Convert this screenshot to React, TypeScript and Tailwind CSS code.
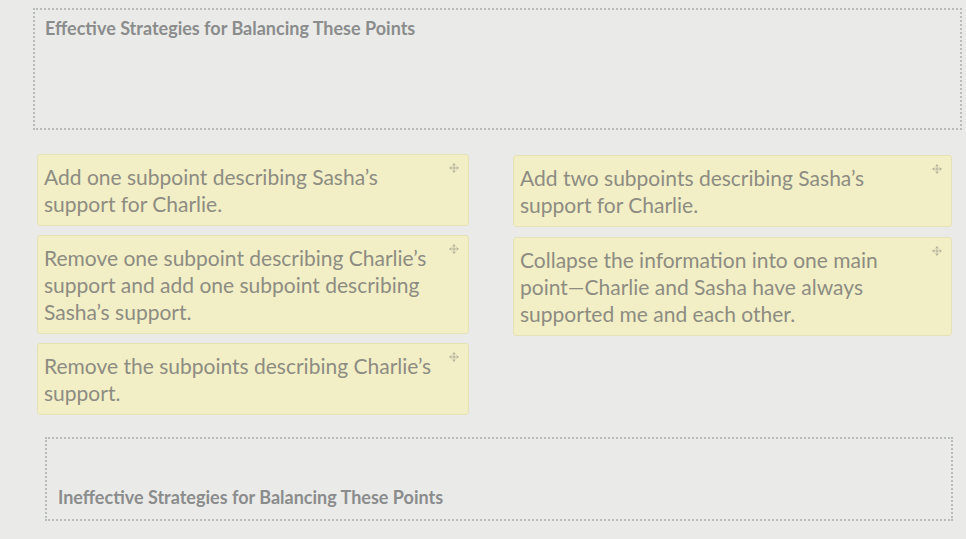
import React from "react";
import { Move } from "lucide-react";

const LEFT = [
  "Add one subpoint describing Sasha’s support for Charlie.",
  "Remove one subpoint describing Charlie’s support and add one subpoint describing Sasha’s support.",
  "Remove the subpoints describing Charlie’s support.",
];

const RIGHT = [
  "Add two subpoints describing Sasha’s support for Charlie.",
  "Collapse the information into one main point—Charlie and Sasha have always supported me and each other.",
];

function Card({ text }: { text: string }) {
  return (
    <div className="relative bg-[#f2efc6] border border-[#e7e2b6] rounded-[3px] pl-[6px] pr-[36px] pt-[8px] pb-[8px]">
      <p className="text-[21px] leading-[27px] text-[#8d8c82]">{text}</p>
      <Move className="absolute top-[8px] right-[9px] w-[10px] h-[10px] text-[#a9a795]" strokeWidth={2} />
    </div>
  );
}

export default function App() {
  return (
    <div
      className="w-[966px] h-[539px] overflow-hidden bg-[#eaebe9] pt-[8px]"
      style={{ fontFamily: "Lato, 'Open Sans', sans-serif" }}
    >
      {/* Effective drop zone */}
      <div className="ml-[33px] w-[929px] h-[122px] border-2 border-dotted border-[#b9bcbc] px-[10px] pt-[7px]">
        <h2 className="text-[18px] font-bold text-[#8b8c8c] leading-[22px]">
          Effective Strategies for Balancing These Points
        </h2>
      </div>

      {/* Answer cards */}
      <div className="mt-[24px] ml-[37px] flex gap-[44px] items-start">
        <div className="w-[432px] flex flex-col gap-[9px]">
          {LEFT.map((t) => (
            <Card key={t} text={t} />
          ))}
        </div>
        <div className="w-[439px] flex flex-col gap-[10px] mt-[1px]">
          {RIGHT.map((t) => (
            <Card key={t} text={t} />
          ))}
        </div>
      </div>

      {/* Ineffective drop zone */}
      <div className="mt-[22px] ml-[45px] w-[908px] h-[84px] border-2 border-dotted border-[#b9bcbc] px-[11px] pb-[11px] flex items-end">
        <h2 className="text-[18px] font-bold text-[#8b8c8c] leading-[22px]">
          Ineffective Strategies for Balancing These Points
        </h2>
      </div>
    </div>
  );
}
